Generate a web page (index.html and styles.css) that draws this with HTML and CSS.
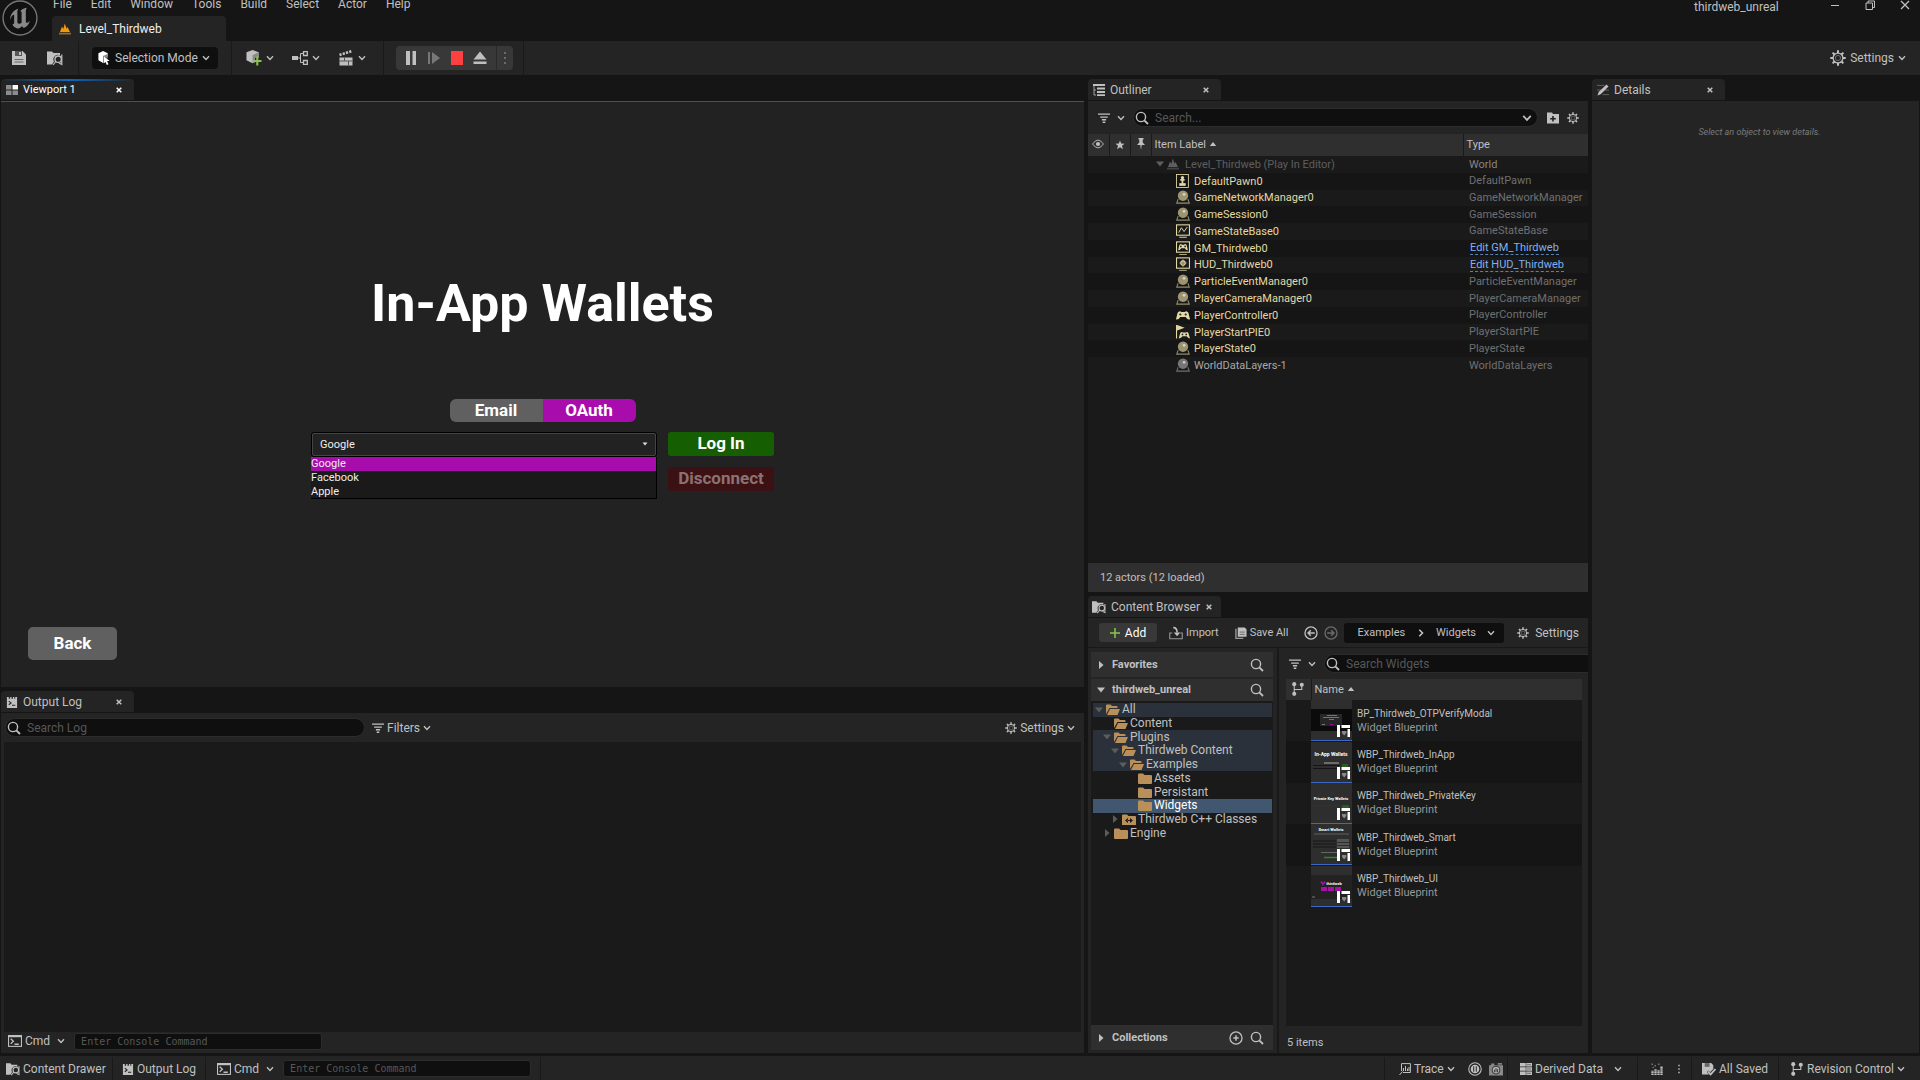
FILE: index.html
```html
<!DOCTYPE html>
<html lang="en">
<head>
<meta charset="utf-8">
<title>thirdweb_unreal</title>
<link rel="stylesheet" href="styles.css">
</head>
<body>
<svg class="sprite" aria-hidden="true">
  <symbol id="chev" viewBox="0 0 8 8"><path d="M1 2.3 4 5.5 7 2.3" fill="none" stroke="currentColor" stroke-width="1.4"/></symbol>
  <symbol id="chevr" viewBox="0 0 8 8"><path d="M2.3 .8 5.5 4 2.3 7.2" fill="none" stroke="currentColor" stroke-width="1.6"/></symbol>
  <symbol id="x" viewBox="0 0 8 8"><path d="M1.7 1.7 6.3 6.3M6.3 1.7 1.7 6.3" stroke="currentColor" stroke-width="1.5"/></symbol>
  <symbol id="down" viewBox="0 0 8 8"><path d="M0 1.5H8L4 6.5Z" fill="currentColor"/></symbol>
  <symbol id="right" viewBox="0 0 8 8"><path d="M2 0V8L6.5 4Z" fill="currentColor"/></symbol>
  <symbol id="sort" viewBox="0 0 8 8"><path d="M.8 6H7.2L4 2Z" fill="currentColor"/></symbol>
  <symbol id="search" viewBox="0 0 14 14"><circle cx="6" cy="6" r="4.6" fill="none" stroke="currentColor" stroke-width="1.4"/><path d="M9.3 9.3 13 13" stroke="currentColor" stroke-width="1.8"/></symbol>
  <symbol id="filter" viewBox="0 0 14 12"><path d="M0 1.5H14M2.500 5H11.500M4.500 8H9.500M5.500 11H8.500" stroke="currentColor" stroke-width="1.6"/></symbol>
  <symbol id="gear" viewBox="0 0 16 16"><circle cx="8" cy="8" r="4.9" fill="none" stroke="currentColor" stroke-width="1.3"/><circle cx="8" cy="8" r="2.6" fill="none" stroke="currentColor" stroke-width=".8" opacity=".6"/><path d="M8 .3V3M8 13V15.7M.3 8H3M13 8H15.7M2.6 2.6 4.5 4.5M11.5 11.5 13.4 13.4M13.4 2.6 11.5 4.5M4.5 11.5 2.6 13.4" stroke="currentColor" stroke-width="2"/></symbol>
  <symbol id="save" viewBox="0 0 14 14"><path d="M0 0H10.5L14 3.5V14H0Z" fill="currentColor"/><path d="M3 0H10V5H3Z" fill="#555"/><path d="M7 1H9V4H7Z" fill="currentColor"/><path d="M2.5 8.5H11.5M2.5 11H11.5" stroke="#666" stroke-width="1.2"/></symbol>
  <symbol id="browse" viewBox="0 0 16 15"><path d="M0 1H5L6.5 2.5H13V5A4.4 4.4 0 0 0 7 11L5 14H0Z" fill="currentColor"/><circle cx="11.2" cy="8.7" r="3.2" fill="none" stroke="currentColor" stroke-width="1.3"/><path d="M8.8 11 6 14.5M12 12.5 14.8 14V4" fill="none" stroke="currentColor" stroke-width="1.2"/></symbol>
  <symbol id="select" viewBox="0 0 12 15"><path d="M5 0 10 2.5V6L5.5 5V13L0 10V2.5Z" fill="#fff"/><path d="M5 5.5 10 3V8L6 6Z" fill="#888"/><path d="M6 5.5 12 10.8H9.3L10.8 14.2 9 15 7.6 11.8 6 13.2Z" fill="#fff"/></symbol>
  <symbol id="cubeadd" viewBox="0 0 16 17"><path d="M6.500 0 13 2.500V8H9V13L6.500 14 0 11V2.500Z" fill="#c0c0c0"/><path d="M6.500 5.500 13 2.500V8H9V13L6.500 14Z" fill="#8a8a8a"/><path d="M11.500 7V16.500M6.800 11.700H16" stroke="#8bc34a" stroke-width="2.200"/></symbol>
  <symbol id="nodes" viewBox="0 0 16 14"><path d="M0 5H6V9H0Z" fill="currentColor"/><path d="M6 7H8M11 2.500H8.500V11.500H11" fill="none" stroke="currentColor"/><path d="M11.500 .7H15.300V4.500H11.500ZM11.500 9.500H15.300V13.300H11.500Z" fill="none" stroke="currentColor" stroke-width="1.300"/></symbol>
  <symbol id="clap" viewBox="0 0 15 16"><path d="M1 5 13.500 1" stroke="currentColor" stroke-width="2.600" stroke-dasharray="2.200 1.200"/><path d="M1 7.500H14V15.500H1Z" fill="currentColor"/><path d="M1 11H14M6 7.500V11M10 11V15.500" stroke="#555"/></symbol>
  <symbol id="grid4" viewBox="0 0 12 10"><path d="M0 0H5.500V4.500H0ZM0 5.500H5.500V10H0ZM6.500 5.500H12V10H6.500Z" fill="#8c8c8c"/><path d="M6.500 0H12V4.500H6.500Z" fill="#fff"/></symbol>
  <symbol id="outl" viewBox="0 0 12 12"><path d="M0 1H12M4 4.500H12M4 8H12M4 11.200H12" stroke="currentColor" stroke-width="1.800"/><path d="M1 1V11H3M1 6H3" fill="none" stroke="currentColor" stroke-width=".8"/></symbol>
  <symbol id="pencil" viewBox="0 0 13 12"><path d="M0 1H8M0 6H4M8 6H13M6 11H13" stroke="#666"/><path d="M10.300 0 12.500 2.200 4 10.500 .5 12 2 8Z" fill="currentColor"/></symbol>
  <symbol id="log" viewBox="0 0 11 13"><path d="M0 1H2V3H3.500V1H5V3H6.500V1H8V3H9V1H11V13H0Z" fill="currentColor"/><path d="M2 5.500 4.500 7.500 2 9.500M5.500 10H9" fill="none" stroke="#222" stroke-width="1.200"/></symbol>
  <symbol id="cmd" viewBox="0 0 13 12"><rect x=".5" y="1" width="12" height="10" fill="none" stroke="currentColor"/><path d="M0 .5H13V2.500H0Z" fill="currentColor"/><path d="M2.500 4 5 6.300 2.500 8.600M6 9H10" fill="none" stroke="currentColor" stroke-width="1.200"/></symbol>
  <symbol id="foldadd" viewBox="0 0 12 12"><path d="M0 .5H5L6 2H12V11.500H0Z" fill="currentColor"/><path d="M6 4V9.500M3.200 6.800H8.800" stroke="#222" stroke-width="1.600"/></symbol>
  <symbol id="eye" viewBox="0 0 13 10"><path d="M.6 5Q6.500-3.500 12.400 5 6.500 13.500 .6 5Z" fill="none" stroke="currentColor"/><circle cx="6.500" cy="5" r="2.300" fill="currentColor"/></symbol>
  <symbol id="star" viewBox="0 0 10 10"><path d="M5 .5 6.200 3.500 9.500 3.700 7 5.800 7.900 9.200 5 7.300 2.100 9.200 3 5.800 .5 3.700 3.800 3.500Z" fill="currentColor"/></symbol>
  <symbol id="pin" viewBox="0 0 8 12"><path d="M1.500 0H6.500V1.500H5.700V4.500L8 7H4.700L4 12 3.300 7H0L2.300 4.500V1.500H1.500Z" fill="currentColor"/></symbol>
  <symbol id="level" viewBox="0 0 12 11"><path d="M1 8.500 3 3 4.300 5.500 5.800 0 7.500 5 8.500 3.500 11 8.500Z" fill="currentColor"/><path d="M0 9.200H12V11H0Z" fill="currentColor" opacity=".6"/></symbol>
  <symbol id="pawn" viewBox="0 0 13 13"><rect x=".5" y=".5" width="11" height="12" fill="none" stroke="currentColor" stroke-width=".8"/><circle cx="6" cy="3.300" r="1.500" fill="currentColor"/><path d="M4 5.500H8M6 4V9" stroke="currentColor" stroke-width="1.600"/><path d="M3 8.500H9V11H3Z" fill="currentColor"/></symbol>
  <symbol id="ball" viewBox="0 0 13 13"><path d="M2 8.500.7 12.200H12.300L11 8.500" fill="none" stroke="currentColor" opacity=".6"/><circle cx="6.500" cy="5.300" r="4.800" fill="currentColor" opacity=".65"/><circle cx="7.500" cy="4" r="1.300" fill="#fff" opacity=".6"/></symbol>
  <symbol id="graph" viewBox="0 0 13 13"><rect x=".5" y=".8" width="12" height="9.600" fill="none" stroke="currentColor"/><path d="M2.500 8 5 3.500 7.500 7 10.500 2.800M3 12.300H10" fill="none" stroke="currentColor" stroke-width=".9"/></symbol>
  <symbol id="pad" viewBox="0 0 13 10"><path d="M0 9 1.500 3Q3 .5 5 2.200H8Q10 .5 11.500 3L13 9Q11 10 9 6.800H4Q2 10 0 9Z" fill="currentColor"/><path d="M3 4.500H5M4 3.500V5.500" stroke="#222" stroke-width=".8"/><circle cx="9" cy="4.500" r="1" fill="#222"/></symbol>
  <symbol id="gm" viewBox="0 0 13 13"><rect x=".5" y=".8" width="12" height="9.600" fill="none" stroke="currentColor"/><path d="M2 8.500 3 4Q4.500 2 5.500 3.500H7.500Q8.500 2 10 4L11 8.500Q9.500 9 8.200 6.800H4.800Q3.500 9 2 8.500ZM3 12H10V12.800H3Z" fill="currentColor"/><circle cx="4.500" cy="5" r=".8" fill="#222"/><circle cx="8.500" cy="5" r=".8" fill="#222"/></symbol>
  <symbol id="hud" viewBox="0 0 13 13"><rect x=".5" y=".8" width="12" height="9.600" fill="none" stroke="currentColor"/><circle cx="6.500" cy="5.600" r="2" fill="none" stroke="currentColor"/><path d="M6.500 2.300V9M3.200 5.600H9.800M3 12.400H10" stroke="currentColor" stroke-width=".7"/></symbol>
  <symbol id="start" viewBox="0 0 13 13"><path d="M.5 0V12.500" stroke="currentColor"/><path d="M1 0 8 2.500 1 5Z" fill="currentColor"/><path d="M2.500 12.500 4 7.500Q5 6 6.300 7H9.300Q10.500 6 11.500 7.500L13 12.500Q11 12.500 10 10.500H6Q5 12.500 2.500 12.500Z" fill="currentColor"/><circle cx="6" cy="8.800" r=".8" fill="#222"/><circle cx="9.500" cy="8.800" r=".8" fill="#222"/></symbol>
  <symbol id="import" viewBox="0 0 13 12"><path d="M3 6H.7V11.300H12.300V6H10.500" fill="none" stroke="#999"/><path d="M4 1Q7.500 1 7.500 5.500" fill="none" stroke="currentColor" stroke-width="1.500"/><path d="M4.500 5.500H10.500L7.500 9Z" fill="currentColor"/></symbol>
  <symbol id="saveall" viewBox="0 0 13 13"><path d="M1 2V12.500H9" fill="none" stroke="#999" stroke-width="1.500"/><path d="M3 .5H10.500L12.500 2.500V10.500H3Z" fill="currentColor"/><path d="M5 5.500H10.500M5 8H10.500" stroke="#666"/></symbol>
  <symbol id="back" viewBox="0 0 13 13"><circle cx="6.500" cy="6.500" r="5.600" fill="none" stroke="currentColor" stroke-width="1.200"/><path d="M10 6.500H4M6.300 4 3.800 6.500 6.300 9" fill="none" stroke="currentColor" stroke-width="1.400"/></symbol>
  <symbol id="fwd" viewBox="0 0 13 13"><circle cx="6.500" cy="6.500" r="5.600" fill="none" stroke="currentColor" stroke-width="1.200"/><path d="M3 6.500H9M6.700 4 9.200 6.500 6.700 9" fill="none" stroke="currentColor" stroke-width="1.400"/></symbol>
  <symbol id="plusc" viewBox="0 0 13 13"><circle cx="6.500" cy="6.500" r="5.600" fill="none" stroke="currentColor" stroke-width="1.200"/><path d="M6.500 4V9M4 6.500H9" stroke="currentColor" stroke-width="1.400"/></symbol>
  <symbol id="branch" viewBox="0 0 11 13"><circle cx="2" cy="2" r="1.900" fill="currentColor"/><circle cx="9" cy="2.500" r="1.900" fill="currentColor"/><circle cx="2" cy="11" r="1.900" fill="currentColor"/><path d="M2 2V11M9 3V7H2" fill="none" stroke="currentColor"/></symbol>
  <symbol id="folder" viewBox="0 0 14 11"><path d="M0 1.500Q0 .5 1 .5H5L6.500 2H13Q14 2 14 3V10Q14 11 13 11H1Q0 11 0 10Z" fill="#b9905a"/></symbol>
  <symbol id="fopen" viewBox="0 0 14 11"><path d="M0 10V1.500Q0 .5 1 .5H4.500L6 2H10.500Q11.500 2 11.500 3V4H3.500Z" fill="#b9905a"/><path d="M4 5H14L11.500 11H1Z" fill="#b9905a"/></symbol>
  <symbol id="fcpp" viewBox="0 0 14 11"><path d="M0 1.500Q0 .5 1 .5H5L6.500 2H13Q14 2 14 3V11H0Z" fill="#b9905a"/><path d="M6 4 3 6.500 6 9ZM8 4 11 6.500 8 9ZM5.500 6H8.500V7H5.500Z" fill="#1a1a1a"/></symbol>
  <symbol id="trace" viewBox="0 0 12 12"><path d="M2.500 8V.6H11.400V9.500H4" fill="none" stroke="currentColor"/><path d="M4.500 5V8M6.500 3V8M8.500 5.500V8M10 4V8M.5 12 3.500 8.500" stroke="currentColor"/></symbol>
  <symbol id="pulse" viewBox="0 0 13 13"><circle cx="6.500" cy="6.500" r="5.800" fill="none" stroke="currentColor"/><circle cx="6.500" cy="6.500" r="4" fill="currentColor"/><path d="M5.300 4V9M7.700 4V9" stroke="#222" stroke-width=".9"/></symbol>
  <symbol id="cam" viewBox="0 0 13 12"><path d="M0 2.500H2V1H5V2.500H13V12H0Z" fill="#888"/><path d="M8 .5H12V2H8Z" fill="#888"/><circle cx="6.500" cy="7" r="3.600" fill="#bbb" stroke="#222" stroke-width=".8"/><path d="M5 6.500V9M6.500 5V9M8 6V9" stroke="#222" stroke-width=".8"/></symbol>
  <symbol id="ddc" viewBox="0 0 12 12"><path d="M0 0H12V3.400H0ZM0 4.300H12V7.700H0ZM0 8.600H12V12H0Z" fill="currentColor"/><path d="M7 1.700H11M7 6H11M7 10.300H11M6 0V12" stroke="#555" stroke-width=".8"/></symbol>
  <symbol id="bars" viewBox="0 0 11 12"><path d="M1 12V7.500M4 12V6M7 12V7M10 12V3" stroke="currentColor" stroke-width="2.300" stroke-dasharray="1.600 .5"/><path d="M0 .5H1.500V2H0ZM3 2H4.500V3.500H3ZM6.500 .5H8V2H6.500ZM1 4H2.500V5H1Z" fill="#777"/></symbol>
  <symbol id="dots" viewBox="0 0 4 14"><path d="M1 1H3V3H1ZM1 6H3V8H1ZM1 11H3V13H1Z" fill="currentColor"/></symbol>
  <symbol id="saved" viewBox="0 0 13 12"><path d="M0 .5H8.500L10.500 2.500V6L7.500 9 6 7.500 4.500 9 6.500 11H0Z" fill="currentColor"/><path d="M2.500 .5H7V4H2.500Z" fill="#666"/><path d="M5.500 8.500 8 11 12.500 6" fill="none" stroke="currentColor" stroke-width="1.700"/></symbol>
  <symbol id="wb" viewBox="0 0 13 12"><path d="M0 0H3V12H0ZM4.500 0H13V3H4.500ZM10.500 4H13V12H10.500Z" fill="#fff"/><path d="M5 6H9.300V8L7.200 10.500 5 8Z" fill="#888"/></symbol>
</svg>

<header class="titlebar">
  <svg class="logo" viewBox="0 0 34 34" aria-label="Unreal Engine"><circle cx="17" cy="17" r="16" fill="#111" stroke="#777" stroke-width="1.300"/><path d="M7.500 19C8 12.500 11.500 9.300 15.500 8.300 14.500 9.500 14.500 10.500 14.500 12V21.500C15.500 23 17.500 22.500 18.500 21.500V12C18.500 10.500 17.500 10.500 17 10.800 18.500 8.500 20.500 8 23.500 7.300 22.500 8.800 22.500 10 22.500 11.500V21C23.500 22 24.800 21.300 26.500 19.300 25.500 23 23 25.500 20.500 26.500L19 24.800 16 27C13 27 10.500 25 9.800 22.800 11 23 11.500 22.300 11.500 21V14.500C11.500 13 9 14.500 7.500 19Z" fill="#888"/></svg>
  <div class="titlemain">
    <nav class="menu"><a href="#">File</a><a href="#">Edit</a><a href="#">Window</a><a href="#">Tools</a><a href="#">Build</a><a href="#">Select</a><a href="#">Actor</a><a href="#">Help</a></nav>
    <div class="leveltab"><svg class="i12 orange"><use href="#level"/></svg>Level_Thirdweb</div>
  </div>
  <div class="project">thirdweb_unreal</div>
  <div class="winbtns">
    <button aria-label="Minimize"><svg class="i10" viewBox="0 0 10 10"><path d="M1 5.500H9" stroke="currentColor"/></svg></button>
    <button aria-label="Restore"><svg class="i10" viewBox="0 0 10 10"><path d="M1 3H7.500V9.500H1ZM3 3V1H9.500V7.500H7.500" fill="none" stroke="currentColor"/></svg></button>
    <button aria-label="Close"><svg class="i10" viewBox="0 0 10 10"><path d="M1 1 9 9M9 1 1 9" stroke="currentColor" stroke-width="1.300"/></svg></button>
  </div>
</header>

<div class="toolbar">
  <div class="tsec saves"><button aria-label="Save"><svg class="i14"><use href="#save"/></svg></button><button aria-label="Browse"><svg class="i16"><use href="#browse"/></svg></button></div>
  <div class="tsec mode"><button class="modebtn"><svg class="i14"><use href="#select"/></svg>Selection Mode<svg class="i8"><use href="#chev"/></svg></button></div>
  <div class="tsec adds"><button aria-label="Add actor"><svg class="i16"><use href="#cubeadd"/></svg><svg class="i8"><use href="#chev"/></svg></button><button aria-label="Blueprints"><svg class="i16"><use href="#nodes"/></svg><svg class="i8"><use href="#chev"/></svg></button><button aria-label="Cinematics"><svg class="i16"><use href="#clap"/></svg><svg class="i8"><use href="#chev"/></svg></button></div>
  <div class="tsec plays"><div class="playbox">
    <button aria-label="Pause"><svg class="i14" viewBox="0 0 14 14"><path d="M2 0H6V14H2ZM8.500 0H12V14H8.500Z" fill="#c0c0c0"/></svg></button>
    <button aria-label="Step"><svg class="i14" viewBox="0 0 14 14"><path d="M1 1H3V13H1ZM5 1 13 7 5 13Z" fill="#777"/></svg></button>
    <button aria-label="Stop"><svg class="i14" viewBox="0 0 14 14"><path d="M1 0H13V14H1Z" fill="#ff4040"/></svg></button>
    <button aria-label="Eject"><svg class="i14" viewBox="0 0 14 14"><path d="M7 .5 13.500 8.500H.5ZM.5 10.500H13.500V13H.5Z" fill="#c0c0c0"/></svg></button>
    <button class="more" aria-label="More"><svg class="i14 dim"><use href="#dots"/></svg></button>
  </div></div>
  <div class="tsec rest"><button><svg class="i16"><use href="#gear"/></svg>Settings<svg class="i8"><use href="#chev"/></svg></button></div>
</div>

<main class="work">
  <div class="col left">
    <section class="pane vpane">
      <div class="tabs"><div class="tab active"><svg class="i12"><use href="#grid4"/></svg><span>Viewport 1</span><button aria-label="Close"><svg class="i8"><use href="#x"/></svg></button></div></div>
      <div class="viewport">
        <h1>In-App Wallets</h1>
        <div class="toggle"><button>Email</button><button class="on">OAuth</button></div>
        <div class="login">
          <div class="combo">
            <select aria-label="Provider"><option>Google</option><option>Facebook</option><option>Apple</option></select>
            <svg class="caret" viewBox="0 0 8 8"><path d="M1.500 2.500H6.500L4 5.500Z" fill="#ddd"/></svg>
            <ul class="options"><li class="on">Google</li><li>Facebook</li><li>Apple</li></ul>
          </div>
          <div class="actions"><button class="go">Log In</button><button class="stop" disabled>Disconnect</button></div>
        </div>
        <button class="backbtn">Back</button>
      </div>
    </section>
    <section class="pane lpane">
      <div class="tabs"><div class="tab"><svg class="i12"><use href="#log"/></svg><span>Output Log</span><button aria-label="Close"><svg class="i8"><use href="#x"/></svg></button></div></div>
      <div class="logbody">
        <div class="logbar"><label class="find logfind"><svg class="i14"><use href="#search"/></svg><input placeholder="Search Log" aria-label="Search Log"></label><button class="tight"><svg class="i12"><use href="#filter"/></svg>Filters<svg class="i8"><use href="#chev"/></svg></button><button class="tight end"><svg class="i12"><use href="#gear"/></svg>Settings<svg class="i8"><use href="#chev"/></svg></button></div>
        <div class="logarea"></div>
        <div class="cmdbar"><button class="tight"><svg class="i14"><use href="#cmd"/></svg>Cmd<svg class="i8 ml"><use href="#chev"/></svg></button><input class="console" placeholder="Enter Console Command" aria-label="Console command"></div>
      </div>
    </section>
  </div>

  <div class="col mid">
    <section class="pane opane">
      <div class="tabs"><div class="tab"><svg class="i12"><use href="#outl"/></svg><span>Outliner</span><button aria-label="Close"><svg class="i8"><use href="#x"/></svg></button></div></div>
      <div class="outbar"><button class="tight" aria-label="Filter"><svg class="i12"><use href="#filter"/></svg><svg class="i8 ml"><use href="#chev"/></svg></button><label class="find outfind"><svg class="i14"><use href="#search"/></svg><input placeholder="Search..." aria-label="Search outliner"><svg class="i10"><use href="#chev"/></svg></label><button aria-label="New folder"><svg class="i12"><use href="#foldadd"/></svg></button><button aria-label="Settings"><svg class="i12"><use href="#gear"/></svg></button></div>
      <div class="outlist">
        <table class="actors">
          <thead><tr><th class="ic"><svg class="i12"><use href="#eye"/></svg></th><th class="ic"><svg class="i10"><use href="#star"/></svg></th><th class="ic"><svg class="i12"><use href="#pin"/></svg></th><th>Item Label <svg class="i8"><use href="#sort"/></svg></th><th class="type">Type</th></tr></thead>
          <tbody>
            <tr class="world"><td></td><td></td><td></td><td><svg class="i8"><use href="#down"/></svg><svg class="i12"><use href="#level"/></svg>Level_Thirdweb (Play In Editor)</td><td>World</td></tr>
            <tr><td></td><td></td><td></td><td><svg class="i14"><use href="#pawn"/></svg>DefaultPawn0</td><td>DefaultPawn</td></tr>
            <tr><td></td><td></td><td></td><td><svg class="i14"><use href="#ball"/></svg>GameNetworkManager0</td><td>GameNetworkManager</td></tr>
            <tr><td></td><td></td><td></td><td><svg class="i14"><use href="#ball"/></svg>GameSession0</td><td>GameSession</td></tr>
            <tr><td></td><td></td><td></td><td><svg class="i14"><use href="#graph"/></svg>GameStateBase0</td><td>GameStateBase</td></tr>
            <tr><td></td><td></td><td></td><td><svg class="i14"><use href="#gm"/></svg>GM_Thirdweb0</td><td><a href="#">Edit GM_Thirdweb</a></td></tr>
            <tr><td></td><td></td><td></td><td><svg class="i14"><use href="#hud"/></svg>HUD_Thirdweb0</td><td><a href="#">Edit HUD_Thirdweb</a></td></tr>
            <tr><td></td><td></td><td></td><td><svg class="i14"><use href="#ball"/></svg>ParticleEventManager0</td><td>ParticleEventManager</td></tr>
            <tr><td></td><td></td><td></td><td><svg class="i14"><use href="#ball"/></svg>PlayerCameraManager0</td><td>PlayerCameraManager</td></tr>
            <tr><td></td><td></td><td></td><td><svg class="i14"><use href="#pad"/></svg>PlayerController0</td><td>PlayerController</td></tr>
            <tr><td></td><td></td><td></td><td><svg class="i14"><use href="#start"/></svg>PlayerStartPIE0</td><td>PlayerStartPIE</td></tr>
            <tr><td></td><td></td><td></td><td><svg class="i14"><use href="#ball"/></svg>PlayerState0</td><td>PlayerState</td></tr>
            <tr class="plain"><td></td><td></td><td></td><td><svg class="i14"><use href="#ball"/></svg>WorldDataLayers-1</td><td>WorldDataLayers</td></tr>
          </tbody>
        </table>
      </div>
      <div class="count">12 actors (12 loaded)</div>
    </section>

    <section class="pane cpane">
      <div class="tabs"><div class="tab"><svg class="i14"><use href="#browse"/></svg><span>Content Browser</span><button aria-label="Close"><svg class="i8"><use href="#x"/></svg></button></div></div>
      <div class="cbar">
        <button class="add"><svg class="i10" viewBox="0 0 10 10"><path d="M5 0V10M0 5H10" stroke="#8bc34a" stroke-width="1.500"/></svg>Add</button>
        <button class="imp"><svg class="i14"><use href="#import"/></svg>Import</button>
        <button class="imp"><svg class="i12"><use href="#saveall"/></svg>Save All</button>
        <button aria-label="Back"><svg class="i14"><use href="#back"/></svg></button>
        <button class="dim" aria-label="Forward"><svg class="i14"><use href="#fwd"/></svg></button>
        <nav class="crumbs"><a href="#">Examples</a><svg class="i8"><use href="#chevr"/></svg><a href="#">Widgets</a><svg class="i8"><use href="#chev"/></svg></nav>
        <button class="cset"><svg class="i12"><use href="#gear"/></svg>Settings</button>
      </div>
      <div class="csplit">
        <aside class="sources">
          <div class="group fav"><svg class="i8"><use href="#right"/></svg><b>Favorites</b><svg class="i14"><use href="#search"/></svg></div>
          <div class="group"><svg class="i8"><use href="#down"/></svg><b>thirdweb_unreal</b><svg class="i14"><use href="#search"/></svg></div>
          <div class="treebox">
          <ul class="tree">
            <li class="path"><svg class="i8"><use href="#down"/></svg><svg class="fold"><use href="#fopen"/></svg>All</li>
            <li class="d1"><i></i><svg class="fold"><use href="#fopen"/></svg>Content</li>
            <li class="d1 path"><svg class="i8"><use href="#down"/></svg><svg class="fold"><use href="#fopen"/></svg>Plugins</li>
            <li class="d2 path"><svg class="i8"><use href="#down"/></svg><svg class="fold"><use href="#fopen"/></svg>Thirdweb Content</li>
            <li class="d3 path"><svg class="i8"><use href="#down"/></svg><svg class="fold"><use href="#fopen"/></svg>Examples</li>
            <li class="d4"><i></i><svg class="fold"><use href="#folder"/></svg>Assets</li>
            <li class="d4"><i></i><svg class="fold"><use href="#folder"/></svg>Persistant</li>
            <li class="d4 sel"><i></i><svg class="fold"><use href="#folder"/></svg>Widgets</li>
            <li class="d2"><svg class="i8"><use href="#right"/></svg><svg class="fold"><use href="#fcpp"/></svg>Thirdweb C++ Classes</li>
            <li class="d1"><svg class="i8"><use href="#right"/></svg><svg class="fold"><use href="#folder"/></svg>Engine</li>
          </ul>
          </div>
          <div class="group coll"><svg class="i8"><use href="#right"/></svg><b>Collections</b><svg class="i14"><use href="#plusc"/></svg><svg class="i14"><use href="#search"/></svg></div>
        </aside>
        <div class="assets">
          <div class="abar"><button class="tight" aria-label="Filter"><svg class="i12"><use href="#filter"/></svg><svg class="i8 ml"><use href="#chev"/></svg></button><label class="find afind"><svg class="i14"><use href="#search"/></svg><input placeholder="Search Widgets" aria-label="Search Widgets"></label></div>
          <div class="alist">
            <table class="files">
              <colgroup><col class="rc"><col class="th"><col></colgroup>
              <thead><tr><th class="ic"><svg class="i14"><use href="#branch"/></svg></th><th colspan="2">Name <svg class="i8"><use href="#sort"/></svg></th></tr></thead>
              <tbody>
                <tr><td></td><td><svg class="thumb" viewBox="0 0 41 40"><path d="M0 0H41V40H0Z" fill="#2e2e2e"/><path d="M0 9H41V31H0Z" fill="#0b0b0b"/><path d="M9 14H31V26H9Z" fill="#262626"/><path d="M16 15.500H26M12 17.500H28M18 19.500H23" stroke="#888" stroke-width=".8"/><path d="M11 24.500H14" stroke="#777"/><path d="M19 24.500H22" stroke="#a0a"/><use href="#wb" x="26" y="25" width="13" height="12"/></svg></td><td><strong>BP_Thirdweb_OTPVerifyModal</strong><small>Widget Blueprint</small></td></tr>
                <tr><td></td><td><svg class="thumb" viewBox="0 0 41 40"><path d="M0 0H41V40H0Z" fill="#2e2e2e"/><text x="20" y="14" class="tt">In-App Wallets</text><path d="M13 21H28" stroke="#aaa"/><path d="M2 23.500H29M2 26.500H29" stroke="#151515"/><path d="M31 22H37V25H31Z" fill="#285c20"/><use href="#wb" x="26" y="25" width="13" height="12"/></svg></td><td><strong>WBP_Thirdweb_InApp</strong><small>Widget Blueprint</small></td></tr>
                <tr><td></td><td><svg class="thumb" viewBox="0 0 41 40"><path d="M0 0H41V40H0Z" fill="#2e2e2e"/><text x="20" y="17" class="tt long">Private Key Wallets</text><path d="M2 23H29" stroke="#333"/><path d="M31 22H38V25H31Z" fill="#285c20"/><use href="#wb" x="26" y="25" width="13" height="12"/></svg></td><td><strong>WBP_Thirdweb_PrivateKey</strong><small>Widget Blueprint</small></td></tr>
                <tr><td></td><td><svg class="thumb" viewBox="0 0 41 40"><path d="M0 0H41V40H0Z" fill="#2e2e2e"/><text x="20" y="7" class="tt long">Smart Wallets</text><path d="M3 10H38" stroke="#777" stroke-width=".7"/><path d="M2 17H25M2 20H25M2 23H25" stroke="#151515"/><path d="M26 15H38V18H26ZM26 19H38V21H26ZM26 22H38V24H26Z" fill="#555"/><path d="M10 28.500H26" stroke="#666"/><path d="M13 33.500H27" stroke="#2d8b20" stroke-width="1.500"/><use href="#wb" x="26" y="25" width="13" height="12"/></svg></td><td><strong>WBP_Thirdweb_Smart</strong><small>Widget Blueprint</small></td></tr>
                <tr><td></td><td><svg class="thumb" viewBox="0 0 41 40"><path d="M0 0H41V40H0Z" fill="#2e2e2e"/><path d="M0 9H41V33H0Z" fill="#222"/><text x="23" y="19" class="tt long">thirdweb</text><path d="M10 15.500 12 18.500 14 15.500" stroke="#b010b0" stroke-width="1.500" fill="none"/><path d="M10 21H16V25H10ZM17 21H23V25H17ZM24 21H30V25H24Z" fill="#a810a8"/><path d="M1 31H4" stroke="#777"/><use href="#wb" x="26" y="25" width="13" height="12"/></svg></td><td><strong>WBP_Thirdweb_UI</strong><small>Widget Blueprint</small></td></tr>
              </tbody>
            </table>
          </div>
          <div class="acount">5 items</div>
        </div>
      </div>
    </section>
  </div>

  <section class="col pane details">
    <div class="tabs"><div class="tab"><svg class="i12"><use href="#pencil"/></svg><span>Details</span><button aria-label="Close"><svg class="i8"><use href="#x"/></svg></button></div></div>
    <div class="dbody"><em>Select an object to view details.</em></div>
  </section>
</main>

<footer class="status">
  <div class="ssec s1"><button><svg class="i14"><use href="#browse"/></svg>Content Drawer</button></div>
  <div class="ssec s2"><button><svg class="i12"><use href="#log"/></svg>Output Log</button></div>
  <div class="ssec s3"><button><svg class="i14"><use href="#cmd"/></svg>Cmd<svg class="i8 ml"><use href="#chev"/></svg></button><input class="console" placeholder="Enter Console Command" aria-label="Status console command"></div>
  <div class="ssec fill"></div>
  <div class="ssec s4"><button><svg class="i12"><use href="#trace"/></svg>Trace<svg class="i8"><use href="#chev"/></svg></button><button aria-label="Trace state"><svg class="i14"><use href="#pulse"/></svg></button><button aria-label="Snapshot"><svg class="i14"><use href="#cam"/></svg></button></div>
  <div class="ssec s5"><button><svg class="i12"><use href="#ddc"/></svg>Derived Data<svg class="i8 ml2"><use href="#chev"/></svg></button></div>
  <div class="ssec s6"><button aria-label="Statistics"><svg class="i12"><use href="#bars"/></svg></button><button aria-label="More"><svg class="i10"><use href="#dots"/></svg></button></div>
  <div class="ssec s7"><button><svg class="i14"><use href="#saved"/></svg>All Saved</button></div>
  <div class="ssec s8"><button><svg class="i14"><use href="#branch"/></svg>Revision Control<svg class="i8"><use href="#chev"/></svg></button></div>
</footer>
</body>
</html>
```
FILE: styles.css
```css
* { box-sizing: border-box; }
body {
  margin: 0;
  min-height: 100vh;
  display: flex;
  flex-direction: column;
  background: #151515;
  color: #c0c0c0;
  font: 12px/14px Roboto, "Liberation Sans", sans-serif;
}
button, input, select { font: inherit; color: inherit; border: 0; background: none; padding: 0; margin: 0; }
button { display: flex; align-items: center; white-space: nowrap; }
a { color: inherit; text-decoration: none; }
ul { list-style: none; margin: 0; padding: 0; }
svg { flex: none; display: block; }
input::placeholder { color: #575757; opacity: 1; }
.sprite { display: none; }
.i8 { width: 8px; height: 8px; }
.i10 { width: 10px; height: 10px; }
.i12 { width: 12px; height: 12px; }
.i14 { width: 14px; height: 14px; }
.i16 { width: 16px; height: 16px; }
.ml { margin-left: 4px; }
.ml2 { margin-left: 8px; }
.dim { color: #6a6a6a; }
.orange { color: #ef9a0c; }

/* title bar */
.titlebar { display: flex; height: 41px; }
.logo { width: 36px; height: 36px; margin: 0 14px 0 2px; }
.titlemain { flex: 1; display: flex; flex-direction: column; justify-content: space-between; }
.menu { display: flex; gap: 19px; padding-left: 1px; line-height: 9px; }
.leveltab { display: flex; align-items: center; gap: 8px; width: 174px; height: 25px; padding-left: 7px; background: #242424; border-radius: 4px 4px 0 0; color: #eee; }
.project { width: 136px; }
.winbtns { display: flex; align-items: flex-start; gap: 25px; padding-right: 10px; }

/* main toolbar */
.toolbar { display: flex; height: 34px; background: #242424; }
.tsec { display: flex; align-items: center; border-right: 1px solid #191919; }
.saves { width: 79px; padding-left: 12px; gap: 21px; }
.mode { width: 153px; padding-left: 13px; }
.modebtn { width: 126px; height: 22px; gap: 4px; padding-left: 5px; background: #0f0f0f; border-radius: 4px; }
.adds { width: 152px; padding-left: 14px; gap: 18px; }
.adds button { gap: 4px; }
.plays { width: 140px; padding-left: 12px; }
.playbox { display: flex; height: 24px; width: 117px; padding-left: 8px; gap: 9px; background: #383838; border-radius: 4px; }
.playbox .more { flex: 1; justify-content: center; border-left: 1px solid #2a2a2a; }
.rest { flex: 1; justify-content: flex-end; padding-right: 14px; border-right: 0; }
.rest button { gap: 4px; }

/* docked panes */
.work { flex: 1; display: grid; grid-template-columns: 1083fr 500fr 327fr; column-gap: 4px; padding: 0 1px 3px; }
.col { min-width: 0; display: flex; flex-direction: column; }
.pane { display: flex; flex-direction: column; min-height: 0; }
.tabs { flex: none; height: 26px; padding-top: 4px; }
.tab { display: flex; align-items: center; gap: 5px; width: 133px; height: 21px; padding: 0 11px 0 5px; background: #242424; border-radius: 4px 4px 0 0; }
.tab span { flex: 1; white-space: nowrap; }
.cpane .tab { padding-left: 4px; }
.tab.active { color: #fff; font-size: 11px; background: linear-gradient(90deg, #242424, #0f68c0 50%, #242424) 0 0 / 100% 2px no-repeat #242424; }

/* viewport */
.vpane { flex: 612; }
.viewport { flex: 1; display: flex; flex-direction: column; align-items: center; padding: 167px 0 27px; background: #222; border-top: 1px solid #1a5c9e; }
.viewport button { justify-content: center; padding-bottom: 2px; color: #fff; font-size: 17px; font-weight: 700; line-height: 20px; }
h1 { margin: 0; color: #fff; font-size: 52px; line-height: 70px; font-weight: 700; }
.toggle { display: flex; margin-top: 60px; border-radius: 6px; overflow: hidden; }
.toggle button { width: 93px; height: 23px; background: #606060; }
.toggle .on { background: #a80cad; }
.login { display: flex; align-items: flex-start; gap: 11px; margin-top: 10px; }
.combo { position: relative; width: 346px; font-size: 11px; }
.combo select { display: block; width: 100%; height: 25px; padding: 0 8px; appearance: none; background: #222; border: 1px solid #000; border-radius: 3px; outline: 1px solid #444; outline-offset: -2px; color: #eee; }
.caret { position: absolute; right: 8px; top: 8px; width: 8px; height: 8px; }
.options { position: absolute; top: 25px; left: 0; right: 0; height: 42px; display: grid; grid-auto-rows: 1fr; background: #1a1a1a; border-bottom: 1px solid #000; border-right: 1px solid #000; color: #eee; }
.options .on { background: #a80cad; }
.actions { display: flex; flex-direction: column; gap: 11px; width: 106px; }
.actions button { height: 24px; border-radius: 3px; }
.go { background: #155e02; }
.actions .stop { background: #3b1113; color: #8d7172; }
.viewport .backbtn { margin-top: auto; align-self: flex-start; margin-left: 27px; width: 89px; height: 33px; background: #606060; border-radius: 5px; }

/* output log */
.lpane { flex: 366; }
.logbody { flex: 1; display: flex; flex-direction: column; background: #242424; padding: 0 3px; }
.logbar { display: flex; align-items: center; height: 29px; padding: 0 6px 0 1px; }
.find { display: flex; align-items: center; height: 19px; padding: 0 6px 0 1px; gap: 6px; background: #0f0f0f; border: 1px solid #2c2c2c; border-radius: 10px; }
.find input { flex: 1; min-width: 0; outline: 0; }
.logfind { width: 360px; margin-right: 7px; }
.tight { gap: 3px; }
.end { margin-left: auto; }
.logarea { flex: 1; background: #1a1a1a; }
.cmdbar { display: flex; align-items: center; height: 21px; padding: 0 0 3px 4px; gap: 9px; }
.console { width: 248px; height: 17px; padding: 0 6px; background: #0f0f0f; border: 1px solid #2c2c2c; border-radius: 3px; font: 10px/12px "DejaVu Sans Mono", monospace; }

/* outliner */
.opane { flex: 517; }
.outbar { display: flex; align-items: center; height: 33px; padding: 0 9px 0 10px; background: #242424; }
.outbar button { margin-right: 8px; }
.outbar button:last-child { margin: 0; }
.outfind { flex: 1; margin-right: 9px; padding-right: 5px; }
.outlist { flex: 1; background: #1a1a1a; }
table { border-collapse: collapse; width: 100%; table-layout: fixed; font-size: 11px; }
th, td { padding: 0; text-align: left; font-weight: 400; white-space: nowrap; }
th { background: #2f2f2f; border-right: 1px solid #1a1a1a; padding-left: 3px; }
th:last-child { border-right: 0; }
th svg { display: inline-block; }
th.ic { padding: 0; text-align: center; }
th.ic svg { vertical-align: -2px; }
.actors { height: 240px; }
.actors thead tr { height: 22px; }
.actors tbody tr { height: 16px; color: #e3d9a4; }
.actors tbody tr:nth-child(even) { background: #151515; }
.actors .ic { width: 21px; }
.actors .type { width: 125px; }
.actors td:nth-child(4) { padding-left: 25px; }
.actors td svg { display: inline-block; vertical-align: -3px; margin-right: 4px; }
.actors td:last-child { padding-left: 6px; color: #707070; overflow: hidden; }
.actors td a { color: #7fb0f0; border-bottom: 1px dashed #5a80b0; margin-left: 1px; }
.actors .world td { color: #5e5e5e; padding-top: 2px; }
.actors .world td:nth-child(4) { padding-left: 5px; }
.actors .world svg { vertical-align: -2px; margin-right: 6px; }
.actors .world .i8 { vertical-align: 0; margin-right: 3px; }
.actors .world td:last-child { color: #858585; }
.actors .plain { color: #a8a8a8; }
.count { height: 29px; padding: 8px 12px 7px; background: #2f2f2f; font-size: 11px; }

/* content browser */
.cpane { flex: 461; }
.cbar { display: flex; align-items: center; height: 30px; padding: 0 9px 0 11px; background: #242424; border-bottom: 1px solid #191919; }
.cbar button { gap: 3px; margin-right: 6px; }
.cbar .add { width: 58px; height: 19px; gap: 5px; justify-content: center; margin-right: 12px; background: #383838; border-radius: 3px; color: #fff; }
.cbar .imp { margin-right: 16px; font-size: 11px; }
.crumbs { display: flex; align-items: center; justify-content: space-between; width: 160px; height: 20px; padding: 0 9px 0 13px; background: #0f0f0f; border-radius: 3px; font-size: 11px; }
.cbar .cset { margin: 0 0 0 auto; gap: 6px; }
.csplit { flex: 1; display: grid; grid-template-columns: 191fr 309fr; background: #242424; }
.sources { display: flex; flex-direction: column; padding: 4px 4px 3px 3px; border-right: 2px solid #191919; }
.group { display: flex; align-items: center; gap: 7px; height: 22px; padding: 0 9px 0 6px; background: #2f2f2f; font-size: 11px; }
.group b { flex: 1; }
.fav { height: 25px; margin-bottom: 2px; }
.coll { height: 25px; }
.treebox { flex: 1; padding: 2px 1px 0 2px; background: #1a1a1a; }
.tree { display: grid; grid-auto-rows: 1fr; height: 137px; }
.tree li { display: flex; align-items: center; gap: 3px; padding-left: 2px; line-height: 13px; white-space: nowrap; }
.tree li .i8, .tree i { color: #5c5c5c; width: 8px; }
.fold { width: 14px; height: 11px; margin-right: -1px; }
.tree .path { background: #2b313a; }
.tree .sel { background: #40576f; color: #fff; }
.tree .d1 { padding-left: 10px; }
.tree .d2 { padding-left: 18px; }
.tree .d3 { padding-left: 26px; }
.tree .d4 { padding-left: 34px; }
.assets { display: flex; flex-direction: column; min-width: 0; }
.abar { display: flex; align-items: center; gap: 8px; height: 31px; padding-left: 10px; }
.afind { flex: 1; border-radius: 10px 0 0 10px; border-right: 0; }
.alist { flex: 1; margin: 0 6px 0 7px; background: #1a1a1a; }
.files { height: 228px; }
.files thead tr { height: 21px; }
.files .rc { width: 25px; }
.files .th { width: 41px; }
.files tbody tr:nth-child(even) { background: #151515; }
.thumb { width: 41px; height: 41px; border-bottom: 1px solid #3b68c4; }
.tt { font: 700 5px Roboto, sans-serif; fill: #fff; text-anchor: middle; }
.tt.long { font-size: 4px; }
.files td:last-child { padding-left: 5px; }
.files strong, .files small { display: block; font-size: 11px; line-height: 14px; font-weight: 400; }
.files strong { font-size: 10px; }
.files small { color: #989898; }
.acount { height: 27px; padding: 10px 8px 3px; font-size: 11px; }

/* details */
.dbody { flex: 1; padding: 24px 0 0 8px; background: #242424; text-align: center; color: #7b7b7b; font-size: 9px; }

/* status bar */
.status { display: flex; height: 24px; padding-top: 1px; background: #242424; }
.ssec { display: flex; align-items: center; border-right: 1px solid #191919; }
.ssec button { gap: 3px; }
.fill { flex: 1; }
.s1 { width: 113px; padding-left: 6px; }
.s2 { width: 93px; padding-left: 9px; }
.s3 { width: 335px; padding-left: 11px; gap: 9px; }
.s4 { width: 123px; padding-left: 14px; gap: 7px; }
.s4 button:first-child { margin-right: 6px; }
.s5 { width: 130px; padding-left: 12px; }
.s6 { width: 54px; padding-left: 13px; gap: 11px; }
.s7 { width: 87px; padding-left: 10px; }
.s8 { width: 141px; padding-left: 11px; border-right: 0; }
```
